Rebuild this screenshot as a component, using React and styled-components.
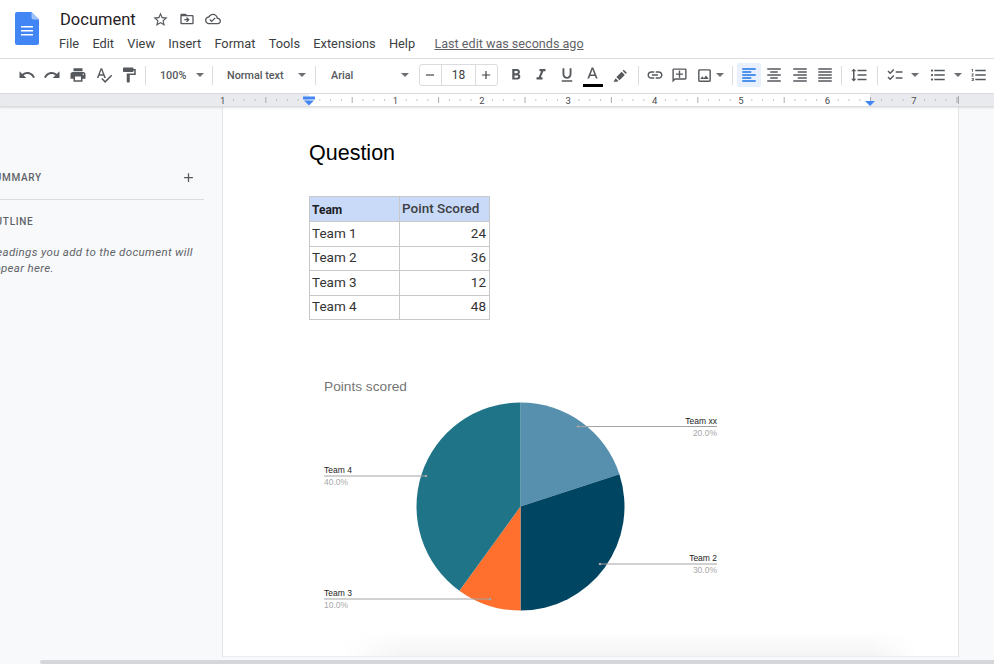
import React from "react";
import styled, { createGlobalStyle } from "styled-components";

const GlobalStyle = createGlobalStyle`
  html, body {
    margin: 0;
    padding: 0;
    background: #fff;
    overflow: hidden;
  }
  body {
    font-family: Roboto, "Liberation Sans", sans-serif;
  }
`;

const paths = {
  star: "M22 9.24l-7.19-.62L12 2 9.19 8.63 2 9.24l5.46 4.73L5.82 21 12 17.27 18.18 21l-1.63-7.03L22 9.24zM12 15.4l-3.76 2.27 1-4.28-3.32-2.88 4.38-.38L12 6.1l1.71 4.04 4.38.38-3.32 2.88 1 4.28L12 15.4z",
  move: "M20 6h-8l-2-2H4c-1.1 0-2 .9-2 2v12c0 1.1.9 2 2 2h16c1.1 0 2-.9 2-2V8c0-1.1-.9-2-2-2zm0 12H4V8h16v10zm-8.01-9l-1.41 1.41L12.16 12H8v2h4.16l-1.59 1.59L11.99 17 16 13.01 11.99 9z",
  cloud: "M19.35 10.04C18.67 6.59 15.64 4 12 4 9.11 4 6.6 5.64 5.35 8.04 2.34 8.36 0 10.91 0 14c0 3.31 2.69 6 6 6h13c2.76 0 5-2.24 5-5 0-2.64-2.05-4.78-4.65-4.96zM19 18H6c-2.21 0-4-1.79-4-4 0-2.05 1.53-3.76 3.56-3.97l1.07-.11.5-.95C8.08 7.14 9.94 6 12 6c2.62 0 4.88 1.86 5.39 4.43l.3 1.5 1.53.11c1.56.1 2.78 1.41 2.78 2.96 0 1.65-1.35 3-3 3zm-9-3.82l-2.09-2.09L6.5 13.5 10 17l6.01-6.01-1.41-1.41z",
  undo: "M12.5 8c-2.65 0-5.05.99-6.9 2.6L2 7v9h9l-3.62-3.62c1.39-1.16 3.16-1.88 5.12-1.88 3.54 0 6.55 2.31 7.6 5.5l2.37-.78C21.08 11.03 17.15 8 12.5 8z",
  redo: "M18.4 10.6C16.55 8.99 14.15 8 11.5 8c-4.65 0-8.58 3.03-9.96 7.22L3.9 16c1.05-3.19 4.05-5.5 7.6-5.5 1.95 0 3.73.72 5.12 1.88L13 16h9V7l-3.6 3.6z",
  print: "M19 8H5c-1.66 0-3 1.34-3 3v6h4v4h12v-4h4v-6c0-1.66-1.34-3-3-3zm-3 11H8v-5h8v5zm3-7c-.55 0-1-.45-1-1s.45-1 1-1 1 .45 1 1-.45 1-1 1zm-1-9H6v4h12V3z",
  spell: "M12.45 16h2.09L9.43 3H7.57L2.46 16h2.09l1.12-3h5.64l1.14 3zm-6.02-5L8.5 5.48 10.57 11H6.43zm15.16.59l-8.09 8.09L9.83 16l-1.41 1.41 5.09 5.09L23 13l-1.41-1.41z",
  paint: "M18 4V3c0-.55-.45-1-1-1H5c-.55 0-1 .45-1 1v4c0 .55.45 1 1 1h12c.55 0 1-.45 1-1V6h1v4H9v11c0 .55.45 1 1 1h2c.55 0 1-.45 1-1v-9h8V4h-3z",
  minus: "M19 13H5v-2h14v2z",
  plus: "M19 13h-6v6h-2v-6H5v-2h6V5h2v6h6v2z",
  bold: "M15.6 10.79c.97-.67 1.65-1.77 1.65-2.79 0-2.26-1.75-4-4-4H7v14h7.04c2.09 0 3.71-1.7 3.71-3.79 0-1.52-.86-2.82-2.15-3.42zM10 6.5h3c.83 0 1.5.67 1.5 1.5s-.67 1.5-1.5 1.5h-3v-3zm3.5 9H10v-3h3.5c.83 0 1.5.67 1.5 1.5s-.67 1.5-1.5 1.5z",
  italic: "M10 4v3h2.21l-3.42 8H6v3h8v-3h-2.21l3.42-8H18V4z",
  underline: "M12 17c3.31 0 6-2.69 6-6V3h-2.5v8c0 1.93-1.57 3.5-3.5 3.5S8.5 12.93 8.5 11V3H6v8c0 3.31 2.69 6 6 6zm-7 2v2h14v-2H5z",
  color: "M11 3L5.5 17h2.25l1.12-3h6.25l1.12 3h2.25L13 3h-2zm-1.38 9L12 5.67 14.38 12H9.62z",
  marker: "M7 14.5L15.5 6l5 5-8.5 8.5-5-5zM5.8 16.2l4.5 4.5-2.3 1.3H2.5l3.3-5.8zM17 4.5L18.8 2.7l5 5L22 9.5l-5-5z",
  link: "M3.9 12c0-1.71 1.39-3.1 3.1-3.1h4V7H7c-2.76 0-5 2.24-5 5s2.24 5 5 5h4v-1.9H7c-1.71 0-3.1-1.39-3.1-3.1zM8 13h8v-2H8v2zm9-6h-4v1.9h4c1.71 0 3.1 1.39 3.1 3.1s-1.39 3.1-3.1 3.1h-4V17h4c2.76 0 5-2.24 5-5s-2.24-5-5-5z",
  comment: "M20 2H4c-1.1 0-2 .9-2 2v18l4-4h14c1.1 0 2-.9 2-2V4c0-1.1-.9-2-2-2zm0 14H5.17L4 17.17V4h16v12zM13 5h-2v4H7v2h4v4h2v-4h4V9h-4z",
  image: "M19 5v14H5V5h14m0-2H5c-1.1 0-2 .9-2 2v14c0 1.1.9 2 2 2h14c1.1 0 2-.9 2-2V5c0-1.1-.9-2-2-2zM14.14 11.86l-3 3.87L9 13.14 6 17h12z",
  left: "M15 15H3v2h12v-2zm0-8H3v2h12V7zM3 13h18v-2H3v2zm0 8h18v-2H3v2zM3 3v2h18V3H3z",
  center: "M7 15v2h10v-2H7zm-4 6h18v-2H3v2zm0-8h18v-2H3v2zm4-6v2h10V7H7zM3 3v2h18V3H3z",
  right: "M3 21h18v-2H3v2zm6-4h12v-2H9v2zm-6-4h18v-2H3v2zm6-4h12V7H9v2zM3 3v2h18V3H3z",
  justify: "M3 21h18v-2H3v2zm0-4h18v-2H3v2zm0-4h18v-2H3v2zm0-4h18V7H3v2zm0-6v2h18V3H3z",
  spacing: "M6 7h2.5L5 3.5 1.5 7H4v10H1.5L5 20.5 8.5 17H6V7zm4-2v2h12V5H10zm0 14h12v-2H10v2zm0-6h12v-2H10v2z",
  check: "M22 7h-9v2h9V7zm0 8h-9v2h9v-2zM5.54 11L2 7.46l1.41-1.41 2.12 2.12 4.24-4.24 1.41 1.41L5.54 11zm0 8L2 15.46l1.41-1.41 2.12 2.12 4.24-4.24 1.41 1.41L5.54 19z",
  bullets: "M4 10.5c-.83 0-1.5.67-1.5 1.5s.67 1.5 1.5 1.5 1.5-.67 1.5-1.5-.67-1.5-1.5-1.5zm0-6c-.83 0-1.5.67-1.5 1.5S3.17 7.5 4 7.5 5.5 6.83 5.5 6 4.83 4.5 4 4.5zm0 12c-.83 0-1.5.68-1.5 1.5s.68 1.5 1.5 1.5 1.5-.68 1.5-1.5-.67-1.5-1.5-1.5zM7 19h14v-2H7v2zm0-6h14v-2H7v2zm0-8v2h14V5H7z",
  numbers: "M2 17h2v.5H3v1h1v.5H2v1h3v-4H2v1zm1-9h1V4H2v1h1v3zm-1 3h1.8L2 13.1v.9h3v-1H3.2L5 10.9V10H2v1zm5-6v2h14V5H7zm0 14h14v-2H7v2zm0-6h14v-2H7v2z",
};

function Icon({ name, size = 18, color = "#55585c" }) {
  return (
    <svg width={size} height={size} viewBox="0 0 24 24" fill={color}>
      <path fillRule="evenodd" d={paths[name]} />
    </svg>
  );
}

function DocsLogo() {
  return (
    <svg width="24" height="33" viewBox="0 0 24 33">
      <path d="M2 0h14.5L24 7.5V31a2 2 0 0 1-2 2H2a2 2 0 0 1-2-2V2a2 2 0 0 1 2-2z" fill="#4285f4" />
      <path d="M16.5 0L24 7.5h-5.5a2 2 0 0 1-2-2z" fill="#a1c2fa" />
      <path d="M6 14h12v1.6H6zM6 18h12v1.6H6zM6 22h12v1.6H6z" fill="#fff" />
    </svg>
  );
}

function Caret({ color = "#6b6e73" }) {
  return (
    <svg width="8" height="4" viewBox="0 0 8 4">
      <path d="M0 0h8L4 4z" fill={color} />
    </svg>
  );
}

function RulerDrawing() {
  const inch = 86.4;
  const zero = 309;
  const marks = [];
  for (let i = -12; i <= 62; i++) {
    const x = zero + i * (inch / 8);
    if (x < 222 || x > 959) continue;
    if (i % 8 === 0) continue;
    if (i % 4 === 0) marks.push(<line key={i} x1={x} x2={x} y1="3" y2="9" stroke="#a8abb0" />);
    else marks.push(<rect key={i} x={x - 0.5} y="5.5" width="1" height="1" fill="#8f9297" />);
  }
  const numbers = [
    [-1, "1"], [1, "1"], [2, "2"], [3, "3"], [4, "4"], [5, "5"], [6, "6"], [7, "7"],
  ];
  return (
    <svg width="994" height="12" viewBox="0 0 994 12">
      <rect width="994" height="12" fill="#e8eaed" />
      <rect x={zero} width={870 - zero} height="12" fill="#fff" />
      {marks}
      <line x1="958.5" x2="958.5" y1="2" y2="10" stroke="#a8abb0" />
      {numbers.map(([n, label]) => (
        <text key={n} x={zero + n * inch} y="9.5" textAnchor="middle" fontSize="9.5" fontFamily="Roboto, sans-serif" fill="#4a4d51">
          {label}
        </text>
      ))}
      <rect x="303" y="2.5" width="12" height="3" fill="#4285f4" />
      <path d="M304 6.5h10l-5 5z" fill="#4285f4" />
      <path d="M865 7h10l-5 5z" fill="#4285f4" />
    </svg>
  );
}

const slices = [
  { share: 0.2, color: "#5790ae" },
  { share: 0.3, color: "#004561" },
  { share: 0.1, color: "#ff702e" },
  { share: 0.4, color: "#1f7587" },
];

const callouts = [
  { name: "Team xx", pct: "20.0%", side: "right", y: 426.5, dot: 578 },
  { name: "Team 2", pct: "30.0%", side: "right", y: 564, dot: 600 },
  { name: "Team 4", pct: "40.0%", side: "left", y: 476, dot: 426 },
  { name: "Team 3", pct: "10.0%", side: "left", y: 599, dot: 490 },
];

function slicePath(from, to) {
  const cx = 211.5;
  const cy = 136.5;
  const r = 104;
  const point = (t) => [
    cx + r * Math.sin(t * 2 * Math.PI),
    cy - r * Math.cos(t * 2 * Math.PI),
  ];
  const [x1, y1] = point(from);
  const [x2, y2] = point(to);
  return `M${cx} ${cy}L${x1} ${y1}A${r} ${r} 0 ${to - from > 0.5 ? 1 : 0} 1 ${x2} ${y2}Z`;
}

function PieChart() {
  let start = 0;
  return (
    <svg width="420" height="250" viewBox="0 0 420 250">
      <text x="15" y="21" fontSize="13.7" fontFamily="'Liberation Sans', sans-serif" fill="#757575">
        Points scored
      </text>
      {slices.map((s) => {
        const d = slicePath(start, start + s.share);
        start += s.share;
        return <path key={s.color} d={d} fill={s.color} />;
      })}
      {callouts.map((c) => {
        const right = c.side === "right";
        const y = c.y - 370;
        const textX = right ? 408 : 15;
        const dotX = c.dot - 309;
        return (
          <g key={c.name}>
            <line x1={dotX} x2={textX} y1={y} y2={y} stroke="#a3a3a3" strokeWidth="1" />
            <circle cx={dotX} cy={y} r="1.3" fill="#a3a3a3" />
            <text x={textX} y={y - 3} textAnchor={right ? "end" : "start"} fontSize="8.5" fontFamily="'Liberation Sans', sans-serif" fill="#222">
              {c.name}
            </text>
            <text x={textX} y={y + 9} textAnchor={right ? "end" : "start"} fontSize="8.5" fontFamily="'Liberation Sans', sans-serif" fill="#a8a8a8">
              {c.pct}
            </text>
          </g>
        );
      })}
    </svg>
  );
}

const rows = [
  ["Team 1", 24],
  ["Team 2", 36],
  ["Team 3", 12],
  ["Team 4", 48],
];

export default function App() {
  return (
    <>
      <GlobalStyle />
      <Shell>
        <Header>
          <LogoSlot>
            <DocsLogo />
          </LogoSlot>
          <TitleBlock>
            <TitleRow>
              <DocTitle>Document</DocTitle>
              <TitleIcons>
                <Icon name="star" size={17} />
                <Icon name="move" size={16} />
                <Icon name="cloud" size={16} />
              </TitleIcons>
            </TitleRow>
            <MenuRow>
              {["File", "Edit", "View", "Insert", "Format", "Tools", "Extensions", "Help"].map((m) => (
                <MenuItem key={m}>{m}</MenuItem>
              ))}
              <LastEdit>Last edit was seconds ago</LastEdit>
            </MenuRow>
          </TitleBlock>
        </Header>

        <Toolbar>
          <Slot $w={25.6}><Icon name="undo" /></Slot>
          <Slot $w={25.6}><Icon name="redo" /></Slot>
          <Slot $w={25.6}><Icon name="print" /></Slot>
          <Slot $w={25.6}><Icon name="spell" /></Slot>
          <Slot $w={25.6}><Icon name="paint" /></Slot>
          <Sep $ml={3} />
          <Dropdown $w={66} $pl={14} $pr={8}>100%<Caret /></Dropdown>
          <Sep />
          <Dropdown $w={102} $pl={14} $pr={9}>Normal text<Caret /></Dropdown>
          <Sep />
          <Dropdown $w={99} $pl={15} $pr={6}>Arial<Caret /></Dropdown>
          <Stepper>
            <StepButton><Icon name="minus" size={14} color="#3c4043" /></StepButton>
            <StepValue>18</StepValue>
            <StepButton><Icon name="plus" size={14} color="#3c4043" /></StepButton>
          </Stepper>
          <Slot $w={25.6} $ml={5}><Icon name="bold" /></Slot>
          <Slot $w={25.6}><Icon name="italic" /></Slot>
          <Slot $w={25.6}><Icon name="underline" /></Slot>
          <ColorSlot>
            <Icon name="color" size={19} />
            <ColorBar />
          </ColorSlot>
          <Slot $w={25.6} $ml={1}><Icon name="marker" size={15} /></Slot>
          <Sep $ml={6} />
          <Slot $w={25} $ml={3.5}><Icon name="link" /></Slot>
          <Slot $w={25}><Icon name="comment" size={17} /></Slot>
          <Slot $w={35}>
            <Icon name="image" size={17} />
            <Caret />
          </Slot>
          <Sep $ml={5} />
          <AlignActive><Icon name="left" color="#1a73e8" /></AlignActive>
          <Slot $w={25.5}><Icon name="center" /></Slot>
          <Slot $w={25.5}><Icon name="right" /></Slot>
          <Slot $w={25.5}><Icon name="justify" /></Slot>
          <Sep $ml={3.5} />
          <Slot $w={25} $ml={4}><Icon name="spacing" /></Slot>
          <Sep $ml={6} />
          <Slot $w={24} $ml={5}><Icon name="check" /></Slot>
          <Slot $w={16}><Caret /></Slot>
          <Slot $w={24} $ml={3}><Icon name="bullets" /></Slot>
          <Slot $w={16}><Caret /></Slot>
          <Slot $w={24} $ml={1}><Icon name="numbers" /></Slot>
        </Toolbar>

        <RulerBar>
          <RulerDrawing />
        </RulerBar>

        <Workspace>
          <Sidebar>
            <SidebarInner>
              <SummaryRow>
                <SectionLabel>SUMMARY</SectionLabel>
                <Icon name="plus" size={15} />
              </SummaryRow>
              <Divider />
              <SectionLabel>OUTLINE</SectionLabel>
              <Hint>
                Headings you add to the document will
                <br />
                appear here.
              </Hint>
            </SidebarInner>
          </Sidebar>

          <Page>
            <Heading>Question</Heading>
            <ScoreTable>
              <colgroup>
                <col width="90" />
                <col width="90" />
              </colgroup>
              <thead>
                <tr>
                  <TeamHead>Team</TeamHead>
                  <PointsHead>Point Scored</PointsHead>
                </tr>
              </thead>
              <tbody>
                {rows.map(([team, points]) => (
                  <tr key={team}>
                    <Cell>{team}</Cell>
                    <Cell $right>{points}</Cell>
                  </tr>
                ))}
              </tbody>
            </ScoreTable>
            <ChartWrap>
              <PieChart />
            </ChartWrap>
            <PageFade />
          </Page>
        </Workspace>

        <ScrollThumb />
      </Shell>
    </>
  );
}

const Shell = styled.div`
  position: relative;
  width: 994px;
  height: 664px;
  overflow: hidden;
  background: #f8f9fa;
  display: flex;
  flex-direction: column;
`;

const Header = styled.header`
  height: 58px;
  flex: none;
  background: #fff;
  border-bottom: 1px solid #dadce0;
  display: flex;
`;

const LogoSlot = styled.div`
  width: 59px;
  flex: none;
  padding: 12px 0 0 15px;
  box-sizing: border-box;
`;

const TitleBlock = styled.div`
  display: flex;
  flex-direction: column;
`;

const TitleRow = styled.div`
  display: flex;
  align-items: center;
  height: 22px;
  margin-top: 8px;
`;

const DocTitle = styled.div`
  font-size: 16.5px;
  color: #1f2124;
  width: 93px;
  padding-left: 1px;
  box-sizing: border-box;
`;

const TitleIcons = styled.div`
  display: flex;
  align-items: center;
  gap: 10px;
`;

const MenuRow = styled.nav`
  display: flex;
  align-items: center;
  gap: 13.3px;
  margin-top: 4px;
  height: 18px;
`;

const MenuItem = styled.span`
  font-size: 12.8px;
  color: #3c4043;
`;

const LastEdit = styled.span`
  font-size: 12.6px;
  color: #5f6368;
  text-decoration: underline;
  margin-left: 6px;
`;

const Toolbar = styled.div`
  height: 32px;
  padding-bottom: 2px;
  flex: none;
  background: #fff;
  display: flex;
  align-items: center;
  padding-left: 14px;
  border-bottom: 1px solid #dadce0;
`;

const Slot = styled.div`
  width: ${(p) => p.$w}px;
  margin-left: ${(p) => p.$ml || 0}px;
  height: 24px;
  flex: none;
  display: flex;
  align-items: center;
  justify-content: center;
  gap: 3px;
`;

const Sep = styled.div`
  width: 1px;
  height: 19px;
  flex: none;
  margin-left: ${(p) => p.$ml || 0}px;
  background: #dadce0;
`;

const Dropdown = styled.div`
  width: ${(p) => p.$w}px;
  box-sizing: border-box;
  flex: none;
  padding: 0 ${(p) => p.$pr}px 0 ${(p) => p.$pl}px;
  display: flex;
  align-items: center;
  justify-content: space-between;
  font-size: 10.8px;
  font-weight: 500;
  color: #55585c;
`;

const Stepper = styled.div`
  width: 79px;
  height: 22px;
  margin-left: 4px;
  flex: none;
  box-sizing: border-box;
  border: 1px solid #dadce0;
  border-radius: 3px;
  display: flex;
  align-items: center;
`;

const StepButton = styled.div`
  width: 21px;
  flex: none;
  display: flex;
  justify-content: center;
`;

const StepValue = styled.div`
  flex: 1;
  height: 100%;
  text-align: center;
  line-height: 20px;
  font-size: 12px;
  color: #3c4043;
  border-left: 1px solid #dadce0;
  border-right: 1px solid #dadce0;
`;

const ColorSlot = styled.div`
  width: 25.6px;
  height: 28px;
  flex: none;
  display: flex;
  flex-direction: column;
  align-items: center;
  justify-content: flex-end;
`;

const ColorBar = styled.div`
  width: 20px;
  height: 3px;
  background: #000;
  margin-bottom: 2px;
`;

const AlignActive = styled.div`
  width: 24px;
  height: 24px;
  margin-left: 4px;
  flex: none;
  display: flex;
  align-items: center;
  justify-content: center;
  background: #e8f0fe;
  border-radius: 2px;
`;

const RulerBar = styled.div`
  height: 12px;
  flex: none;
  line-height: 0;
  border-bottom: 1px solid #dadce0;
  box-shadow: 0 1px 2px rgba(60, 64, 67, 0.15);
  position: relative;
  z-index: 2;
`;

const Workspace = styled.div`
  flex: 1;
  display: flex;
  min-height: 0;
`;

const Sidebar = styled.aside`
  width: 222px;
  flex: none;
  overflow: hidden;
`;

const SidebarInner = styled.div`
  margin-left: -12px;
  width: 216px;
  padding-top: 62px;
`;

const SummaryRow = styled.div`
  display: flex;
  align-items: center;
  justify-content: space-between;
  padding-right: 8px;
  height: 16px;
`;

const SectionLabel = styled.div`
  font-size: 10px;
  font-weight: 500;
  letter-spacing: 0.7px;
  color: #5f6368;
`;

const Divider = styled.div`
  height: 1px;
  background: #dadce0;
  margin: 14px 0 16px;
`;

const Hint = styled.div`
  margin-top: 17px;
  font-size: 11.5px;
  font-style: italic;
  line-height: 16px;
  letter-spacing: 0.33px;
  color: #5f6368;
  white-space: nowrap;
`;

const Page = styled.main`
  position: relative;
  width: 737px;
  height: 550px;
  flex: none;
  box-sizing: border-box;
  padding: 32px 0 0 86px;
  background: #fff;
  border-left: 1px solid #e4e5e8;
  border-right: 1px solid #e4e5e8;
  border-bottom: 1px solid #ececee;
`;

const Heading = styled.h1`
  margin: 0;
  font-family: "Liberation Sans", Arial, sans-serif;
  font-weight: 400;
  font-size: 21.5px;
  line-height: 28px;
  color: #000;
`;

const ScoreTable = styled.table`
  margin-top: 29px;
  border-collapse: collapse;
  table-layout: fixed;
  width: 180px;
  font-size: 13.5px;
  color: #333;
  td, th {
    border: 1px solid #c8c8c8;
    padding: 0 3px 0 2px;
  }
`;

const TeamHead = styled.th`
  background: #c9daf8;
  height: 21px;
  text-align: left;
  font-size: 12px;
  font-weight: 700;
  color: #1a1c1f;
  padding-top: 2px !important;
  padding-bottom: 1px !important;
`;

const PointsHead = styled.th`
  background: #c9daf8;
  text-align: left;
  font-size: 13.5px;
  font-weight: 500;
  color: #3c4043;
  white-space: nowrap;
  padding-bottom: 3px !important;
`;

const Cell = styled.td`
  height: 21.5px;
  padding-bottom: 2px !important;
  text-align: ${(p) => (p.$right ? "right" : "left")};
`;

const ChartWrap = styled.div`
  margin-top: 50px;
  line-height: 0;
`;

const PageFade = styled.div`
  position: absolute;
  left: 120px;
  right: 40px;
  bottom: 0;
  height: 24px;
  background: linear-gradient(to bottom, rgba(240, 240, 241, 0), rgba(240, 240, 241, 0.75));
  mask-image: linear-gradient(to right, transparent, #000 10%, #000 92%, transparent);
`;

const ScrollThumb = styled.div`
  position: absolute;
  left: 40px;
  right: 0;
  bottom: 0;
  height: 4px;
  border-radius: 2px 0 0 2px;
  background: #d5d6da;
`;
